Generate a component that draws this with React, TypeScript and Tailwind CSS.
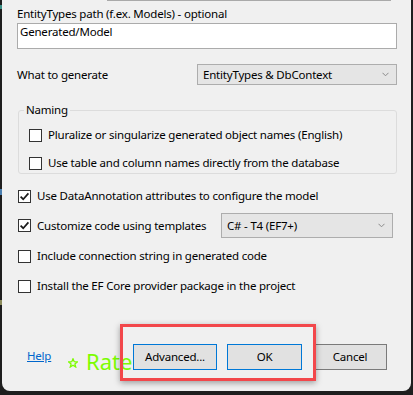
import React from 'react'

const FONT = { fontFamily: '"Noto Sans", "Segoe UI", sans-serif' }

function CheckBox({ checked }: { checked?: boolean }) {
  return (
    <span className="flex size-[13px] shrink-0 items-center justify-center border border-[#333333] bg-white">
      {checked && (
        <svg width="11" height="11" viewBox="0 0 11 11">
          <path d="M1.6 5.6 L4.2 8.2 L9.4 2.4" fill="none" stroke="#1a1a1a" strokeWidth="1.7" />
        </svg>
      )}
    </span>
  )
}

function Chevron() {
  return (
    <svg width="7" height="5" viewBox="0 0 7 5" className="shrink-0">
      <path d="M0.5 0.8 L3.5 3.8 L6.5 0.8" fill="none" stroke="#8a8a8a" strokeWidth="1" />
    </svg>
  )
}

function Select({ value, className }: { value: string; className: string }) {
  return (
    <div
      className={`flex items-center justify-between border border-[#adadad] bg-[#e5e5e5] pl-[5px] pr-[7px] leading-[16px] ${className}`}
    >
      <span>{value}</span>
      <Chevron />
    </div>
  )
}

function CheckRow({ label, checked, className }: { label: string; checked?: boolean; className?: string }) {
  return (
    <div className={`flex h-[16px] items-center gap-[6px] leading-[16px] ${className ?? ''}`}>
      <CheckBox checked={checked} />
      <span className="whitespace-nowrap">{label}</span>
    </div>
  )
}

export default function App() {
  return (
    <div
      className="flex h-[395px] w-[413px] overflow-hidden bg-[#1e1e1e] text-[11.5px] tracking-[-0.2px] text-black"
      style={FONT}
    >
      {/* editor behind the dialog */}
      <div className="flex w-[2px] flex-col">
        <div className="mt-[5px] h-[4px] bg-[#3b8f86]" />
        <div className="mt-[180px] h-[6px] bg-[#4a7fb0]" />
        <div className="mt-[105px] h-[5px] bg-[#8a8a5a]" />
      </div>

      <div className="relative flex h-[391px] w-[409px] flex-col rounded-b-[8px] bg-[#f0f0f0] pl-[15px] pr-[14px]">
        {/* bottom edge of the previous field */}
        <div className="ml-[90px] h-px w-[284px] bg-[#a9a9a9]" />

        <div className="mt-[5px] leading-[16px]">EntityTypes path (f.ex. Models) - optional</div>
        <div className="mt-px h-[26px] border border-[#ababab] bg-white pl-[2px] leading-[16px]">Generated/Model</div>

        <div className="mt-[15px] flex items-center justify-between leading-[16px]">
          <span>What to generate</span>
          <Select value="EntityTypes & DbContext" className="h-[21px] w-[200px]" />
        </div>

        <fieldset className="ml-px mt-[17px] rounded-[3px] border border-[#dcdcdc] p-0 pb-[2px]">
          <legend className="ml-[5px] px-[2px] leading-[16px]">Naming</legend>
          <div className="flex flex-col pl-[10px]">
            <CheckRow className="mt-[9px]" label="Pluralize or singularize generated object names (English)" />
            <CheckRow className="mt-[12px]" label="Use table and column names directly from the database" />
          </div>
        </fieldset>

        <CheckRow className="ml-px mt-[14px]" checked label="Use DataAnnotation attributes to configure the model" />

        <div className="ml-px mt-[9px] flex h-[25px] items-center leading-[16px]">
          <CheckBox checked />
          <span className="ml-[6px] whitespace-nowrap">Customize code using templates</span>
          <Select value="C# - T4 (EF7+)" className="ml-auto mr-[4px] h-[25px] w-[172px]" />
        </div>

        <CheckRow className="ml-px mt-[10px]" label="Include connection string in generated code" />
        <CheckRow className="ml-px mt-[14px]" label="Install the EF Core provider package in the project" />

        {/* buttons */}
        <div className="mt-[50px] flex items-start">
          <a className="ml-[10px] mt-[4px] w-[41px] leading-[16px] text-[#0066cc] underline">Help</a>
          <div className="flex w-[65px] items-start whitespace-nowrap text-[#7cfc00]">
            <svg width="10" height="10" viewBox="0 0 10 10" className="mt-[14px] shrink-0">
              <path
                d="M5 0.8 L6.2 3.7 L9.3 3.9 L6.9 5.9 L7.7 9 L5 7.3 L2.3 9 L3.1 5.9 L0.7 3.9 L3.8 3.7 Z"
                fill="none"
                stroke="#7cfc00"
                strokeWidth="1.3"
              />
            </svg>
            <span className="ml-[8px] mt-[6px] text-[22px] leading-[22px] tracking-normal">Rate</span>
          </div>
          <button className="h-[26px] w-[84px] border border-[#0078d7] bg-[#e1e1e1] leading-[16px]">Advanced...</button>
          <button className="ml-[10px] h-[26px] w-[75px] border border-[#0078d7] bg-[#e1e1e1] leading-[16px]">OK</button>
          <button className="ml-[11px] h-[26px] w-[74px] border border-[#7a7a7a] bg-[#e1e1e1] leading-[16px]">Cancel</button>
        </div>

        {/* red highlight annotation */}
        <div className="absolute left-[118px] top-[324px] h-[57px] w-[196px] border-[3px] border-[#f2474b] shadow-[0_2px_6px_rgba(0,0,0,0.35)]" />
      </div>
    </div>
  )
}
